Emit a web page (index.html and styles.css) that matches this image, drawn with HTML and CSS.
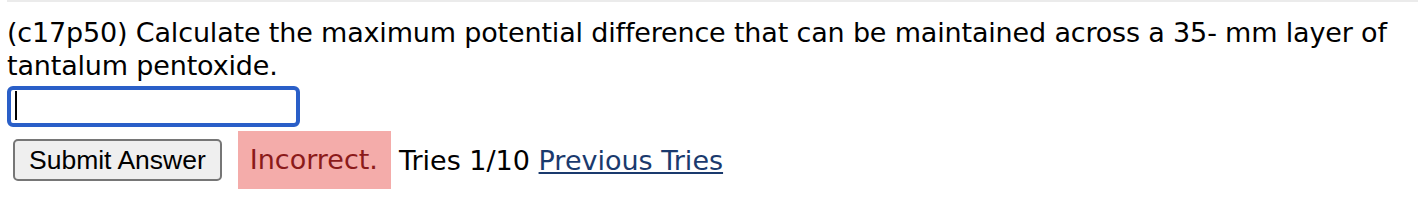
FILE: index.html
```html
<!DOCTYPE html>
<html lang="en">
<head>
  <meta charset="UTF-8">
  <title>c17p50</title>
  <link rel="stylesheet" href="styles.css">
</head>
<body>
  <div class="pregunta">
    <p class="enunciado">(c17p50) Calculate the maximum potential difference that can be maintained across a 35- mm layer of tantalum pentoxide.</p>
    <div class="campo">
      <input class="respuesta" type="text">
      <span class="cursor"></span>
    </div>
    <div class="acciones">
      <button class="enviar">Submit Answer</button>
      <span class="estado">Incorrect.</span>
      <span class="intentos">Tries 1/10 <a href="#">Previous Tries</a></span>
    </div>
  </div>
</body>
</html>
```

FILE: styles.css
```css
body {
  margin: 0;
  font-family: Verdana, "DejaVu Sans", sans-serif;
  font-size: 27px;
  font-variant-ligatures: none;
  color: #000;
  background: #fff;
}

.pregunta {
  margin-left: 7px;
  border-top: 2px solid #ebebeb;
  padding-top: 14px;
}

.enunciado {
  margin: 0;
  line-height: 33px;
  letter-spacing: -0.17px;
  width: 1405px;
}

.campo {
  position: relative;
  width: 293px;
  margin-top: 4px;
}

.respuesta {
  display: block;
  box-sizing: border-box;
  width: 293px;
  height: 41px;
  margin: 0;
  border: 4px solid #2a5fc8;
  border-radius: 6px;
  outline: none;
  font-size: 24px;
  font-family: inherit;
  padding: 0 4px;
}

/* cursor de texto visible como en la captura */
.cursor {
  position: absolute;
  left: 8px;
  top: 5px;
  width: 2px;
  height: 29px;
  background: #000;
}

.acciones {
  display: flex;
  align-items: center;
  margin-top: 4px;
}

.enviar {
  margin-left: 6px;
  height: 42px;
  padding: 0 14px;
  font-family: "Liberation Sans", Arial, sans-serif;
  font-size: 26.5px;
  background: #efefef;
  border: 2px solid #767676;
  border-radius: 5px;
  color: #000;
}

.estado {
  margin-left: 16px;
  background: #f4acaa;
  color: #8b1a1a;
  height: 58px;
  line-height: 58px;
  padding: 0 13px 0 12px;
}

.intentos {
  margin-left: 8px;
}

.intentos a {
  color: #1a3a6e;
}
```
